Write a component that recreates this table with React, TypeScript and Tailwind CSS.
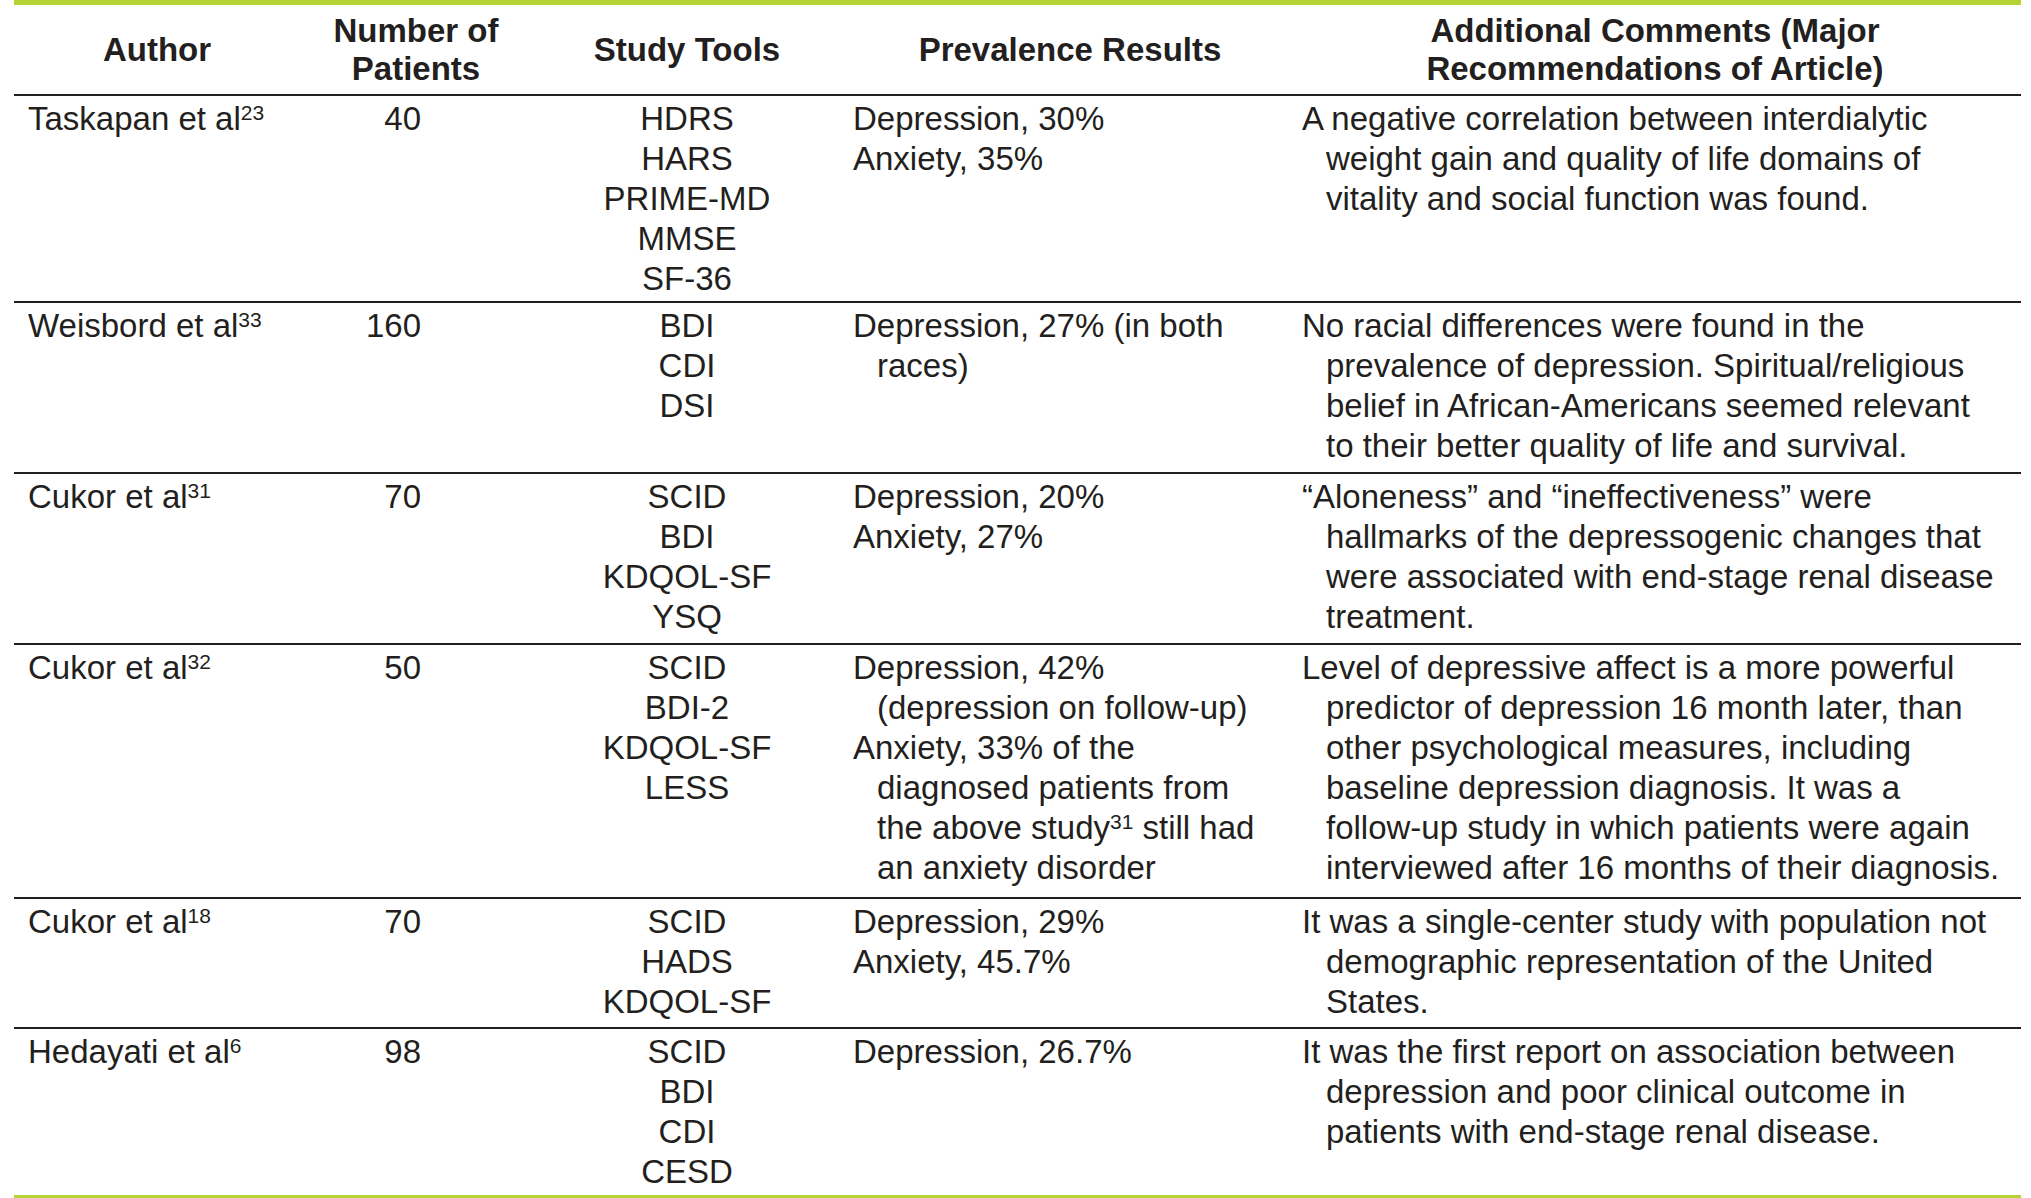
import React from "react";

type Line = React.ReactNode;

interface Row {
  author: string;
  sup: string;
  n: string;
  tools: string[];
  prev: Line[][];
  comments: Line[];
  h: string;
  last?: boolean;
}

const rows: Row[] = [
  {
    author: "Taskapan et al",
    sup: "23",
    n: "40",
    tools: ["HDRS", "HARS", "PRIME-MD", "MMSE", "SF-36"],
    prev: [["Depression, 30%"], ["Anxiety, 35%"]],
    comments: [
      "A negative correlation between interdialytic",
      "weight gain and quality of life domains of",
      "vitality and social function was found.",
    ],
    h: "h-[207px] border-b-2",
  },
  {
    author: "Weisbord et al",
    sup: "33",
    n: "160",
    tools: ["BDI", "CDI", "DSI"],
    prev: [["Depression, 27% (in both", "races)"]],
    comments: [
      "No racial differences were found in the",
      "prevalence of depression. Spiritual/religious",
      "belief in African-Americans seemed relevant",
      "to their better quality of life and survival.",
    ],
    h: "h-[171px] border-b-2",
  },
  {
    author: "Cukor et al",
    sup: "31",
    n: "70",
    tools: ["SCID", "BDI", "KDQOL-SF", "YSQ"],
    prev: [["Depression, 20%"], ["Anxiety, 27%"]],
    comments: [
      "\u201CAloneness\u201D and \u201Cineffectiveness\u201D were",
      "hallmarks of the depressogenic changes that",
      "were associated with end-stage renal disease",
      "treatment.",
    ],
    h: "h-[171px] border-b-2",
  },
  {
    author: "Cukor et al",
    sup: "32",
    n: "50",
    tools: ["SCID", "BDI-2", "KDQOL-SF", "LESS"],
    prev: [
      ["Depression, 42%", "(depression on follow-up)"],
      [
        "Anxiety, 33% of the",
        "diagnosed patients from",
        <>
          the above study<sup className="text-[21px]">31</sup> still had
        </>,
        "an anxiety disorder",
      ],
    ],
    comments: [
      "Level of depressive affect is a more powerful",
      "predictor of depression 16 month later, than",
      "other psychological measures, including",
      "baseline depression diagnosis. It was a",
      "follow-up study in which patients were again",
      "interviewed after 16 months of their diagnosis.",
    ],
    h: "h-[254px] border-b-2",
  },
  {
    author: "Cukor et al",
    sup: "18",
    n: "70",
    tools: ["SCID", "HADS", "KDQOL-SF"],
    prev: [["Depression, 29%"], ["Anxiety, 45.7%"]],
    comments: [
      "It was a single-center study with population not",
      "demographic representation of the United",
      "States.",
    ],
    h: "h-[130px] border-b-2",
  },
  {
    author: "Hedayati et al",
    sup: "6",
    n: "98",
    tools: ["SCID", "BDI", "CDI", "CESD"],
    prev: [["Depression, 26.7%"]],
    comments: [
      "It was the first report on association between",
      "depression and poor clinical outcome in",
      "patients with end-stage renal disease.",
    ],
    h: "h-[166px]",
    last: true,
  },
];

function Para({ lines }: { lines: Line[] }) {
  return (
    <div>
      {lines.map((l, i) => (
        <div key={i} className={i === 0 ? "whitespace-nowrap" : "whitespace-nowrap pl-[24px]"}>
          {l}
        </div>
      ))}
    </div>
  );
}

export default function App() {
  return (
    <div className="w-[2031px] h-[1198px] overflow-hidden bg-white text-[#231f20] font-['Liberation_Sans',Arial,Helvetica,sans-serif]">
      <div className="ml-[14px] w-[2007px]">
        <div className="h-[5px] bg-[#b5d335]" />
        {/* header */}
        <div className="grid grid-cols-[286px_232px_310px_456px_1fr] h-[89px] items-center text-[33px] leading-[38px] font-bold text-center border-b-2 border-[#231f20] box-content">
          <div>Author</div>
          <div>
            <div>Number of</div>
            <div>Patients</div>
          </div>
          <div>Study Tools</div>
          <div>Prevalence Results</div>
          <div className="pr-[9px]">
            <div>Additional Comments (Major</div>
            <div>Recommendations of Article)</div>
          </div>
        </div>
        {rows.map((r, idx) => (
          <div
            key={idx}
            className={
              "grid grid-cols-[286px_232px_310px_456px_1fr] pt-[3px] text-[33px] leading-[40px] border-[#231f20] box-border " +
              r.h
            }
          >
            <div className="pl-[14px] whitespace-nowrap">
              {r.author}
              <sup className="text-[21px]">{r.sup}</sup>
            </div>
            <div className="text-right pr-[111px]">{r.n}</div>
            <div className="text-center">
              {r.tools.map((t) => (
                <div key={t}>{t}</div>
              ))}
            </div>
            <div className="pl-[11px]">
              {r.prev.map((p, i) => (
                <Para key={i} lines={p} />
              ))}
            </div>
            <div className="pl-[4px]">
              <Para lines={r.comments} />
            </div>
          </div>
        ))}
        <div className="h-[4px] bg-[#b5d335]" />
      </div>
    </div>
  );
}
